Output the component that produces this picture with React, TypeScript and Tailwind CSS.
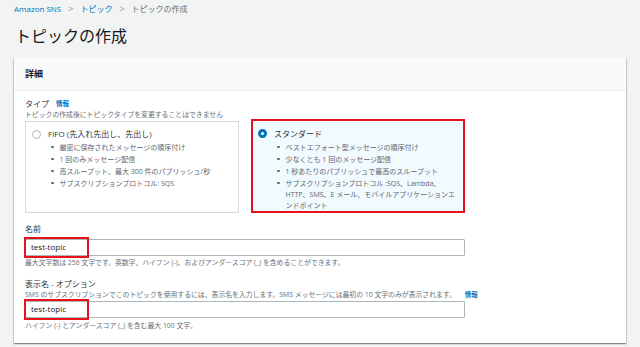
import React from 'react'

const FONT = { fontFamily: '"Open Sans", "Noto Sans CJK JP", sans-serif' }

const FIFO_ITEMS = [
  '厳密に保存されたメッセージの順序付け',
  '1 回のみメッセージ配信',
  '高スループット、最大 300 件のパブリッシュ/秒',
  'サブスクリプションプロトコル: SQS',
]

const STANDARD_ITEMS: React.ReactNode[] = [
  'ベストエフォート型メッセージの順序付け',
  '少なくとも 1 回のメッセージ配信',
  '1 秒あたりのパブリッシュで最高のスループット',
  <>
    サブスクリプションプロトコル :SQS、Lambda、
    <br />
    HTTP、SMS、E メール、モバイルアプリケーションエ
    <br />
    ンドポイント
  </>,
]

function Bullets({ items }: { items: React.ReactNode[] }) {
  return (
    <ul className="mt-[1.5px] flex flex-col gap-[1px]">
      {items.map((it, i) => (
        <li key={i} className="flex items-start text-[7px] leading-[11px] text-[#5f666e] whitespace-nowrap">
          <span className="mt-[4px] ml-[3px] mr-[6px] w-[2.5px] h-[2.5px] rounded-full bg-[#5f666e] shrink-0" />
          <span>{it}</span>
        </li>
      ))}
    </ul>
  )
}

function TextField({ value }: { value: string }) {
  return (
    <div className="relative w-[440px]">
      <div className="h-[17px] border border-[#aab7b8] bg-white rounded-[1px] flex items-center pl-[5px] text-[8px] font-medium text-[#16191f]">
        {value}
      </div>
      {/* red annotation box drawn over the screenshot */}
      <div className="absolute -left-[1px] -top-[2px] w-[65px] h-[21px] border-2 border-[#e8121d]" />
    </div>
  )
}

export default function App() {
  return (
    <div style={FONT} className="w-[640px] h-[347px] bg-[#f2f3f3] px-[14px] overflow-hidden text-[#16191f]">
      <div className="pt-[3px] flex items-center h-[15px] text-[8px] leading-[12px]">
        <span className="text-[#0073bb]">Amazon SNS</span>
        <span className="mx-[7px] text-[#879596] text-[9px]">&gt;</span>
        <span className="text-[#0073bb]">トピック</span>
        <span className="mx-[7px] text-[#879596] text-[9px]">&gt;</span>
        <span className="text-[#687078]">トピックの作成</span>
      </div>

      <h1 className="mt-[10px] pl-[1px] text-[16px] leading-[22px] font-normal text-[#16191f]">トピックの作成</h1>

      <div className="mt-[11px] bg-white shadow-[0_1px_1px_0_rgba(0,28,36,0.3),1px_1px_1px_0_rgba(0,28,36,0.15),-1px_1px_1px_0_rgba(0,28,36,0.15)]">
        <div className="h-[33px] bg-[#fafafa] border-b border-[#eaeded] px-[11px] flex items-center">
          <h2 className="text-[9px] font-bold">詳細</h2>
        </div>

        <div className="px-[11px] pt-[7px] pb-[12px]">
          <div className="flex items-center text-[8px] leading-[11px] text-[#2e3339]">
            <span>タイプ</span>
            <span className="ml-[7px] text-[6.5px] font-bold text-[#0073bb]">情報</span>
          </div>
          <p className="text-[6.85px] leading-[11px] text-[#687078]">トピックの作成後にトピックタイプを変更することはできません</p>

          <div className="mt-[1px] w-[440px] grid grid-cols-2 gap-[12px]">
            <div className="h-[92px] border border-[#d5dbdb] bg-white pl-[6px] pt-[6px]">
              <div className="flex items-center h-[12px]">
                <span className="w-[9px] h-[9px] rounded-full border border-[#aab7b8] bg-white" />
                <span className="ml-[7px] text-[8px] text-[#2e3339]">FIFO (先入れ先出し、先出し)</span>
              </div>
              <div className="pl-[16px]">
                <Bullets items={FIFO_ITEMS} />
              </div>
            </div>

            <div className="h-[94px] -mt-[2px] border-2 border-[#e8121d] bg-[#f1faff] pl-[5px] pt-[6px]">
              <div className="flex items-center h-[13px]">
                <span className="w-[9px] h-[9px] rounded-full border-[3px] border-[#0073bb] bg-white" />
                <span className="ml-[7px] text-[8px] text-[#2e3339]">スタンダード</span>
              </div>
              <div className="pl-[16px]">
                <Bullets items={STANDARD_ITEMS} />
              </div>
            </div>
          </div>

          <div className="mt-[10px] text-[8px] leading-[11px] text-[#2e3339]">名前</div>
          <div className="mt-[4.5px]">
            <TextField value="test-topic" />
          </div>
          <p className="mt-[1.5px] text-[6.85px] leading-[11px] text-[#687078]">
            最大文字数は 256 文字です。英数字、ハイフン (-)、およびアンダースコア (_) を含めることができます。
          </p>

          <div className="mt-[10px] text-[8px] leading-[11px] text-[#2e3339]">表示名 - オプション</div>
          <div className="flex items-center text-[6.85px] leading-[11px] text-[#687078]">
            <span>SMS のサブスクリプションでこのトピックを使用するには、表示名を入力します。SMS メッセージには最初の 10 文字のみが表示されます。</span>
            <span className="ml-[9px] text-[6.5px] font-bold text-[#0073bb]">情報</span>
          </div>
          <div className="mt-[0.5px]">
            <TextField value="test-topic" />
          </div>
          <p className="mt-[2.5px] text-[6.85px] leading-[11px] text-[#687078]">ハイフン (-) とアンダースコア (_) を含む最大 100 文字。</p>
        </div>
      </div>
    </div>
  )
}
